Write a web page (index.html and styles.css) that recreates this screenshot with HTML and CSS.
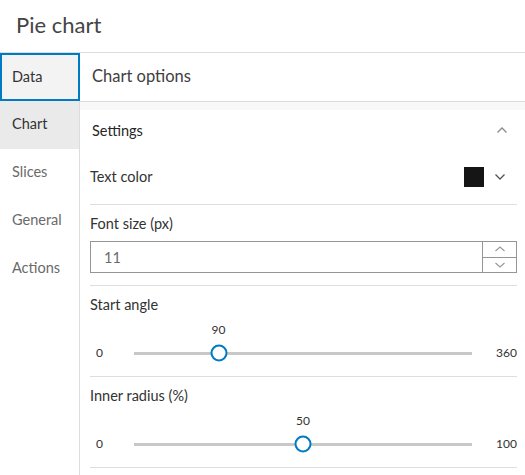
FILE: index.html
```html
<!DOCTYPE html>
<html lang="en">
<head>
<meta charset="utf-8">
<title>Pie chart</title>
<link rel="stylesheet" href="styles.css">
</head>
<body>
<div class="app">
  <header class="top">Pie chart</header>
  <div class="layout">
    <nav class="sidebar">
      <div class="tab focused">Data</div>
      <div class="tab selected">Chart</div>
      <div class="tab">Slices</div>
      <div class="tab">General</div>
      <div class="tab">Actions</div>
    </nav>
    <main class="main">
      <div class="main-head">Chart options</div>
      <div class="strip"></div>
      <section class="section">
        <div class="section-head">
          <span>Settings</span>
          <svg class="chev" width="12" height="8" viewBox="0 0 12 8"><polyline points="1.5,6.5 6,2 10.5,6.5" fill="none" stroke="#8a8a8a" stroke-width="1.3"/></svg>
        </div>
        <div class="row color-row">
          <span class="label">Text color</span>
          <div class="color-pick">
            <span class="swatch"></span>
            <svg class="chev" width="12" height="8" viewBox="0 0 12 8"><polyline points="1.5,1.5 6,6 10.5,1.5" fill="none" stroke="#555" stroke-width="1.3"/></svg>
          </div>
        </div>
        <div class="block">
          <div class="label">Font size (px)</div>
          <div class="number-input">
            <span class="value">11</span>
            <div class="spinner">
              <span class="spin"><svg width="12" height="8" viewBox="0 0 12 8"><polyline points="1.5,6 6,2 10.5,6" fill="none" stroke="#9a9a9a" stroke-width="1.2"/></svg></span>
              <span class="spin"><svg width="12" height="8" viewBox="0 0 12 8"><polyline points="1.5,2 6,6 10.5,2" fill="none" stroke="#9a9a9a" stroke-width="1.2"/></svg></span>
            </div>
          </div>
        </div>
        <div class="block slider-block">
          <div class="label">Start angle</div>
          <div class="slider">
            <span class="min">0</span>
            <div class="track-wrap">
              <span class="current" style="left:25%">90</span>
              <div class="track"><span class="thumb" style="left:25%"></span></div>
            </div>
            <span class="max">360</span>
          </div>
        </div>
        <div class="block slider-block">
          <div class="label">Inner radius (%)</div>
          <div class="slider">
            <span class="min">0</span>
            <div class="track-wrap">
              <span class="current" style="left:50%">50</span>
              <div class="track"><span class="thumb" style="left:50%"></span></div>
            </div>
            <span class="max">100</span>
          </div>
        </div>
      </section>
    </main>
  </div>
</div>
</body>
</html>
```
FILE: styles.css
```css
* { box-sizing: border-box; }
html, body { margin: 0; padding: 0; background: #fff; }
body {
  font-family: Lato, "Open Sans", "Liberation Sans", sans-serif;
  color: #323232;
  width: 525px;
  height: 475px;
  overflow: hidden;
}
.app { display: flex; flex-direction: column; height: 475px; }
.top {
  height: 53px;
  flex: none;
  display: flex;
  align-items: center;
  padding-left: 16px;
  font-size: 22px;
  color: #454545;
  border-bottom: 1px solid #dcdcdc;
  padding-bottom: 4px;
}
.layout { display: flex; flex: 1; min-height: 0; }
.sidebar {
  width: 80px;
  flex: none;
  border-right: 1px solid #dcdcdc;
}
.tab {
  height: 48px;
  display: flex;
  align-items: center;
  padding-left: 12px;
  padding-bottom: 3px;
  font-size: 14.5px;
  color: #6a6a6a;
}
.tab.focused {
  background: #f3f3f3;
  color: #323232;
  border: 2px solid #007ac2;
  padding-left: 10px;
  padding-bottom: 2px;
  margin-right: -1px;
  position: relative;
}
.tab.selected { background: #eaeaea; color: #323232; }
.main { flex: 1; min-width: 0; }
.main-head {
  height: 49px;
  display: flex;
  align-items: center;
  padding-left: 12px;
  padding-bottom: 2px;
  font-size: 16.5px;
  color: #404040;
  border-bottom: 1px solid #dcdcdc;
}
.strip { height: 8px; background: #f8f8f8; }
.section { padding: 0 8px 0 10px; }
.section-head {
  height: 42px;
  display: flex;
  align-items: center;
  justify-content: space-between;
  padding-left: 2px;
  padding-right: 9px;
  padding-bottom: 2px;
  font-size: 14.5px;
  font-weight: 400;
  color: #262626;
}
.label { font-size: 14.5px; color: #323232; line-height: 20px; }
.row { display: flex; align-items: center; justify-content: space-between; }
.color-row { height: 53px; border-bottom: 1px solid #dedede; padding-bottom: 3px; }
.color-pick { display: flex; align-items: center; gap: 10px; padding-right: 11px; }
.swatch { width: 20px; height: 20px; background: #151515; display: block; }
.chev { display: block; }
.block { border-bottom: 1px solid #dedede; }
.number-input {
  margin-top: 7px;
  height: 32px;
  border: 1px solid #959595;
  display: flex;
  align-items: stretch;
}
.number-input .value {
  flex: 1;
  display: flex;
  align-items: center;
  padding-left: 13px;
  font-size: 14.5px;
  color: #6a6a6a;
}
.spinner {
  width: 34px;
  border-left: 1px solid #959595;
  display: flex;
  flex-direction: column;
}
.spin { flex: 1; display: flex; align-items: center; justify-content: center; }
.spin + .spin { border-top: 1px solid #959595; }
.block:not(.slider-block) { padding: 9px 0 12px; }
.slider-block { padding: 9px 0 13px; }
.slider {
  display: grid;
  grid-template-columns: 44px 1fr 45px;
  align-items: end;
  margin-top: 7px;
}
.min, .max { font-size: 12px; color: #323232; line-height: 20px; }
.min { padding-left: 6px; }
.max { text-align: right; }
.track-wrap { position: relative; padding-top: 21px; }
.current {
  position: absolute;
  top: 0;
  transform: translateX(-50%);
  font-size: 12px;
  line-height: 16px;
  color: #323232;
}
.track {
  position: relative;
  height: 20px;
  background: linear-gradient(#c8c8c8, #c8c8c8) center / 100% 3px no-repeat;
}
.thumb {
  position: absolute;
  top: 50%;
  width: 17px;
  height: 17px;
  border: 2px solid #007ac2;
  border-radius: 50%;
  background: #fff;
  transform: translate(-50%, -50%);
}
```
